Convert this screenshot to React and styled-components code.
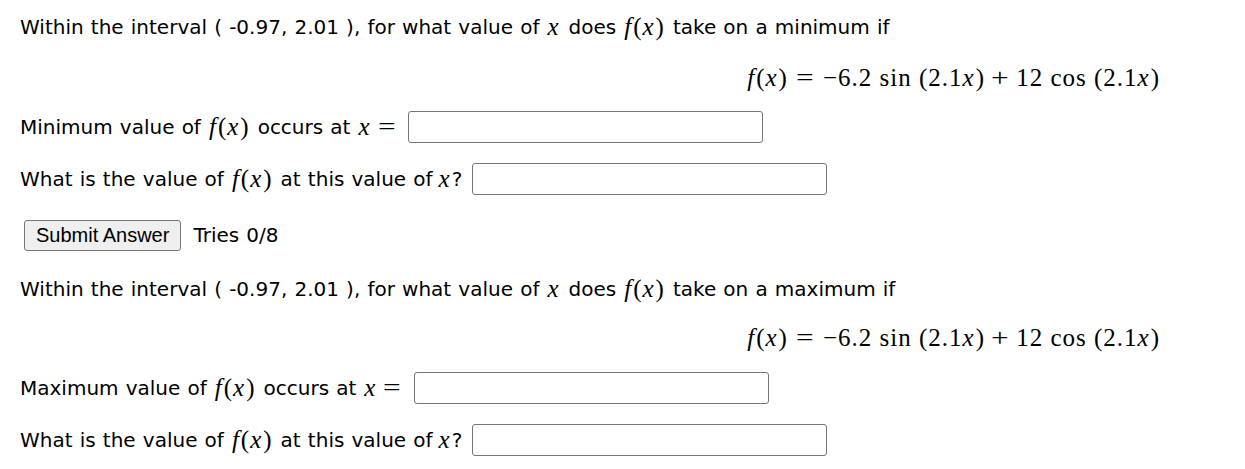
import React from 'react';
import styled, { createGlobalStyle } from 'styled-components';

const GlobalStyle = createGlobalStyle`
  body {
    margin: 0;
    background: #ffffff;
    color: #000000;
    font-family: "DejaVu Sans", Verdana, sans-serif;
    font-size: 20px;
  }
`;

const Page = styled.div`
  display: flex;
  flex-direction: column;
  padding: 11px 20px 0 20px;
`;

const Line = styled.div`
  display: flex;
  align-items: center;
  height: 32px;
  margin-top: ${(p) => p.$mt || 0}px;
  white-space: nowrap;
  word-spacing: 0.8px;
`;

const Display = styled(Line)`
  justify-content: flex-end;
  padding-right: 65px;
`;

const Math = styled.span`
  font-family: "Liberation Serif", "Times New Roman", serif;
  font-size: 25px;
  letter-spacing: 1px;
  margin: 0 ${(p) => p.$r ?? 8}px 0 ${(p) => p.$l ?? 8}px;
  word-spacing: 0;
`;

const V = styled.i`
  font-style: italic;
  padding-right: 1px;
`;

const Op = styled.span`
  display: inline-block;
  margin: 0 ${(p) => p.$sp || 5}px;
  transform: scaleX(1.25);
`;

const Field = styled.input`
  width: 355px;
  height: 32px;
  box-sizing: border-box;
  border: 1px solid #767676;
  border-radius: 3px;
  margin-left: ${(p) => p.$ml ?? 7}px;
  font-size: 18px;
  padding: 0 6px;
  background: #ffffff;
`;

const Button = styled.button`
  font-family: "Liberation Sans", Arial, sans-serif;
  font-size: 20px;
  height: 31px;
  padding: 0 11px;
  margin-left: 4px;
  margin-right: 12px;
  background: #efefef;
  color: #000000;
  border: 1px solid #767676;
  border-radius: 3px;
`;

const Fx = () => (
  <>
    <V>f</V>(<V>x</V>)
  </>
);

const Formula = () => (
  <Math $l={0} $r={0}>
    <Fx />
    <Op $sp={10}>=</Op>−6.2 sin (2.1<V>x</V>)<Op $sp={8}>+</Op>12 cos (2.1<V>x</V>)
  </Math>
);

const Block = ({ kind, label, first }) => (
  <>
    <Line $mt={first ? 0 : 22}>
      Within the interval ( -0.97, 2.01 ), for what value of
      <Math><V>x</V></Math>does
      <Math><Fx /></Math>take on a {kind} if
    </Line>
    <Display $mt={first ? 19 : 17}>
      <Formula />
    </Display>
    <Line $mt={first ? 17 : 18}>
      {label} value of
      <Math><Fx /></Math>occurs at
      <Math $r={0}><V>x</V><Op $sp={8}>=</Op></Math>
      <Field type="text" $ml={5} />
    </Line>
    <Line $mt={20}>
      What is the value of
      <Math><Fx /></Math>at this value of
      <Math $l={6} $r={0}><V>x</V></Math>?
      <Field type="text" $ml={10} />
    </Line>
  </>
);

export default function App() {
  return (
    <>
      <GlobalStyle />
      <Page>
        <Block kind="minimum" label="Minimum" first />
        <Line $mt={24}>
          <Button>Submit Answer</Button>
          Tries 0/8
        </Line>
        <Block kind="maximum" label="Maximum" />
      </Page>
    </>
  );
}
